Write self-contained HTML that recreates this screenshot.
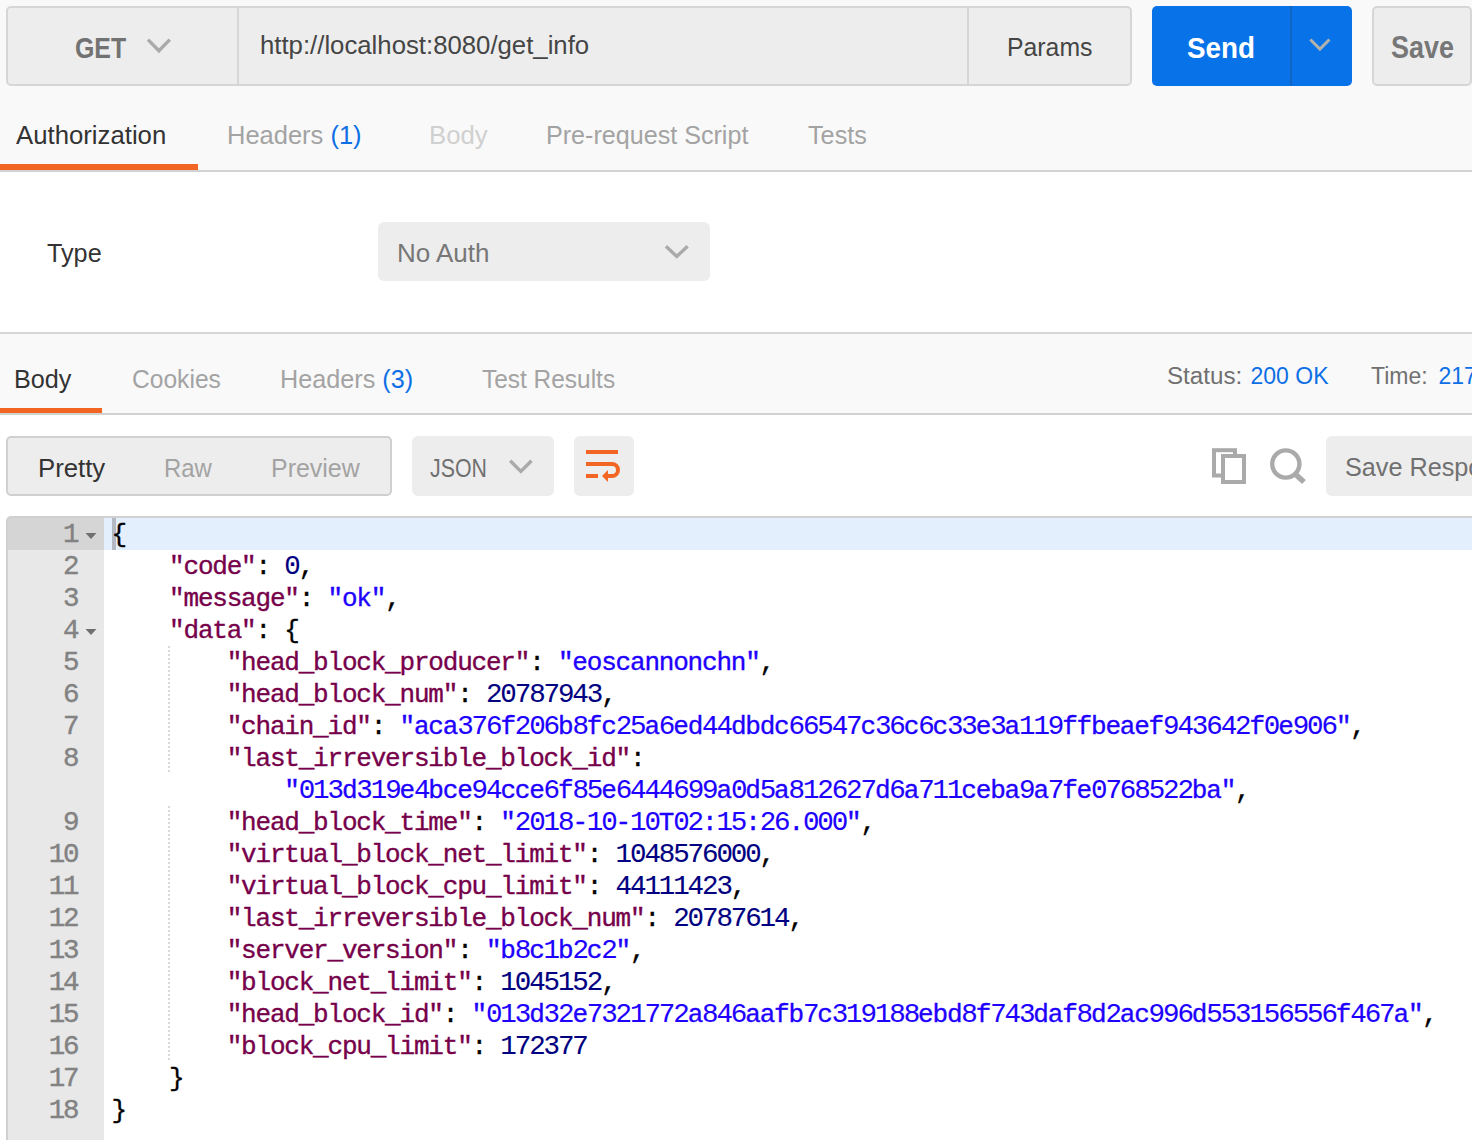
<!DOCTYPE html>
<html><head><meta charset="utf-8">
<style>
*{margin:0;padding:0;box-sizing:border-box}
html,body{width:1472px;height:1140px;overflow:hidden;background:#fff}
body{position:relative;font-family:"Liberation Sans",sans-serif}
.a{position:absolute}
.t{position:absolute;line-height:1;white-space:nowrap;transform-origin:0 0}
.box{position:absolute;background:#ededed}
.code{position:absolute;font-family:"Liberation Mono",monospace;font-size:26px;letter-spacing:-1.2px;-webkit-text-stroke:0.35px currentColor;white-space:pre;color:#000}
.ln{position:absolute;height:32px;line-height:32px}
.code i{font-style:normal;font-size:27.5px;letter-spacing:-2.1px;line-height:0;-webkit-text-stroke:0.1px currentColor}
.g i{font-style:normal;font-size:27.5px;letter-spacing:-2.1px;line-height:0;-webkit-text-stroke:0.4px currentColor}
.k{color:#76004a}.s{color:#1e00ff}.n{color:#000080}
.g{position:absolute;font-family:"Liberation Mono",monospace;font-size:26px;letter-spacing:-1.2px;color:#828282;-webkit-text-stroke:0.3px currentColor;text-align:right;width:77.5px;left:0;height:32px;line-height:32px;white-space:pre}
</style></head><body>

<div class="a" style="left:0;top:0;width:1472px;height:171px;background:#f9f9f9"></div>
<div class="box" style="left:6px;top:6px;width:1126px;height:80px;border:2px solid #d6d6d6;border-radius:5px"></div>
<div class="a" style="left:237px;top:8px;width:2px;height:76px;background:#d6d6d6"></div>
<div class="a" style="left:967px;top:8px;width:2px;height:76px;background:#d6d6d6"></div>
<div class="a" style="left:1152px;top:6px;width:200px;height:80px;background:#0872e8;border-radius:5px"></div>
<div class="a" style="left:1290px;top:6px;width:2px;height:80px;background:#1264c4"></div>
<div class="box" style="left:1372px;top:6px;width:100px;height:80px;border:2px solid #d6d6d6;border-radius:5px"></div>
<div class="a" style="left:0;top:164px;width:198px;height:6px;background:#f26522"></div>
<div class="a" style="left:0;top:170px;width:1472px;height:2px;background:#d2d2d2"></div>
<div class="box" style="left:378px;top:222px;width:332px;height:59px;border-radius:6px"></div>
<div class="a" style="left:0;top:332px;width:1472px;height:2px;background:#d6d6d6"></div>
<div class="a" style="left:0;top:334px;width:1472px;height:80px;background:#f9f9f9"></div>
<div class="a" style="left:0;top:408px;width:102px;height:6px;background:#f26522"></div>
<div class="a" style="left:0;top:413px;width:1472px;height:2px;background:#d2d2d2"></div>
<div class="box" style="left:6px;top:436px;width:386px;height:60px;border:2px solid #d0d0d0;border-radius:5px"></div>
<div class="box" style="left:412px;top:436px;width:142px;height:60px;border-radius:6px"></div>
<div class="box" style="left:574px;top:436px;width:60px;height:60px;border-radius:6px"></div>
<div class="box" style="left:1326px;top:436px;width:200px;height:60px;border-radius:6px"></div>
<div class="a" style="left:6px;top:516px;width:1500px;height:700px;border:2px solid #d0d0d0;border-radius:5px;background:#fff"></div>

<div class="t" style="left:75.00px;top:32.60px;font-size:30.00px;color:#727272;font-weight:bold;transform:scaleX(0.8300)">GET</div>
<div class="t" style="left:260.00px;top:32.09px;font-size:26.00px;color:#454545;transform:scaleX(0.9900)">http://localhost:8080/get_info</div>
<div class="t" style="left:1006.50px;top:33.86px;font-size:26.50px;color:#454545;transform:scaleX(0.9360)">Params</div>
<div class="t" style="left:1186.50px;top:33.85px;font-size:29.00px;color:#ffffff;font-weight:bold;transform:scaleX(0.9600)">Send</div>
<div class="t" style="left:1390.50px;top:31.95px;font-size:31.00px;color:#777777;font-weight:bold;transform:scaleX(0.8700)">Save</div>
<div class="t" style="left:15.50px;top:121.99px;font-size:26.00px;color:#333333;transform:scaleX(0.9900)">Authorization</div>
<div class="t" style="left:227.00px;top:121.99px;font-size:26.00px;color:#a3a3a3;transform:scaleX(0.9800)">Headers <span style="color:#0d6fe5">(1)</span></div>
<div class="t" style="left:429.00px;top:121.99px;font-size:26.00px;color:#d0d0d0;transform:scaleX(0.9900)">Body</div>
<div class="t" style="left:546.00px;top:121.99px;font-size:26.00px;color:#a3a3a3;transform:scaleX(0.9660)">Pre-request Script</div>
<div class="t" style="left:808.00px;top:121.99px;font-size:26.00px;color:#a3a3a3;transform:scaleX(0.9700)">Tests</div>
<div class="t" style="left:46.50px;top:240.29px;font-size:26.00px;color:#333333;transform:scaleX(0.9700)">Type</div>
<div class="t" style="left:397.00px;top:240.29px;font-size:26.00px;color:#777777">No Auth</div>
<div class="t" style="left:14.00px;top:365.79px;font-size:26.00px;color:#333333;transform:scaleX(0.9700)">Body</div>
<div class="t" style="left:132.00px;top:365.79px;font-size:26.00px;color:#a3a3a3;transform:scaleX(0.9460)">Cookies</div>
<div class="t" style="left:280.00px;top:365.79px;font-size:26.00px;color:#a3a3a3;transform:scaleX(0.9700)">Headers <span style="color:#0d6fe5">(3)</span></div>
<div class="t" style="left:482.00px;top:365.79px;font-size:26.00px;color:#a3a3a3;transform:scaleX(0.9400)">Test Results</div>
<div class="t" style="left:1166.50px;top:364.93px;font-size:23.00px;color:#707070;transform:scaleX(1.0500)">Status:</div>
<div class="t" style="left:1250.50px;top:364.93px;font-size:23.00px;color:#0d6fe5">200 OK</div>
<div class="t" style="left:1371.00px;top:364.93px;font-size:23.00px;color:#707070">Time:</div>
<div class="t" style="left:1438.50px;top:364.93px;font-size:23.00px;color:#0d6fe5">217 ms</div>
<div class="t" style="left:37.50px;top:454.99px;font-size:26.00px;color:#333333;transform:scaleX(0.9900)">Pretty</div>
<div class="t" style="left:163.50px;top:454.99px;font-size:26.00px;color:#a3a3a3;transform:scaleX(0.9200)">Raw</div>
<div class="t" style="left:270.60px;top:454.99px;font-size:26.00px;color:#a3a3a3;transform:scaleX(0.9600)">Preview</div>
<div class="t" style="left:430.00px;top:454.99px;font-size:26.00px;color:#707070;transform:scaleX(0.8200)">JSON</div>
<div class="t" style="left:1345.00px;top:454.09px;font-size:26.00px;color:#707070;transform:scaleX(0.9700)">Save Response</div>
<div class="a" style="left:8px;top:518px;width:96px;height:630px;background:#e8e8e8"></div>
<div class="a" style="left:8px;top:518px;width:96px;height:32px;background:#d5d5d5"></div>
<div class="a" style="left:104px;top:518px;width:1400px;height:32px;background:#e4effd"></div>
<div class="a" style="left:112px;top:518px;width:4px;height:32px;background:#b3b8c3"></div>
<div class="a" style="left:168px;top:646px;width:2px;height:128px;background:repeating-linear-gradient(to bottom,#dadada 0 2px,transparent 2px 4px)"></div>
<div class="a" style="left:168px;top:806px;width:2px;height:256px;background:repeating-linear-gradient(to bottom,#dadada 0 2px,transparent 2px 4px)"></div>
<div class="g" style="top:519px"><i>1</i></div>
<div class="ln code" style="top:519px;left:111.5px">{</div>
<div class="g" style="top:551px"><i>2</i></div>
<div class="ln code" style="top:551px;left:169.1px"><span class="k">&quot;code&quot;</span>: <span class="n"><i>0</i></span>,</div>
<div class="g" style="top:583px"><i>3</i></div>
<div class="ln code" style="top:583px;left:169.1px"><span class="k">&quot;message&quot;</span>: <span class="s">&quot;ok&quot;</span>,</div>
<div class="g" style="top:615px"><i>4</i></div>
<div class="ln code" style="top:615px;left:169.1px"><span class="k">&quot;data&quot;</span>: {</div>
<div class="g" style="top:647px"><i>5</i></div>
<div class="ln code" style="top:647px;left:226.7px"><span class="k">&quot;head_block_producer&quot;</span>: <span class="s">&quot;eoscannonchn&quot;</span>,</div>
<div class="g" style="top:679px"><i>6</i></div>
<div class="ln code" style="top:679px;left:226.7px"><span class="k">&quot;head_block_num&quot;</span>: <span class="n"><i>20787943</i></span>,</div>
<div class="g" style="top:711px"><i>7</i></div>
<div class="ln code" style="top:711px;left:226.7px"><span class="k">&quot;chain_id&quot;</span>: <span class="s">&quot;aca<i>376</i>f<i>206</i>b<i>8</i>fc<i>25</i>a<i>6</i>ed<i>44</i>dbdc<i>66547</i>c<i>36</i>c<i>6</i>c<i>33</i>e<i>3</i>a<i>119</i>ffbeaef<i>943642</i>f<i>0</i>e<i>906</i>&quot;</span>,</div>
<div class="g" style="top:743px"><i>8</i></div>
<div class="ln code" style="top:743px;left:226.7px"><span class="k">&quot;last_irreversible_block_id&quot;</span>:</div>
<div class="ln code" style="top:775px;left:284.3px"><span class="s">&quot;<i>013</i>d<i>319</i>e<i>4</i>bce<i>94</i>cce<i>6</i>f<i>85</i>e<i>6444699</i>a<i>0</i>d<i>5</i>a<i>812627</i>d<i>6</i>a<i>711</i>ceba<i>9</i>a<i>7</i>fe<i>0768522</i>ba&quot;</span>,</div>
<div class="g" style="top:807px"><i>9</i></div>
<div class="ln code" style="top:807px;left:226.7px"><span class="k">&quot;head_block_time&quot;</span>: <span class="s">&quot;<i>2018</i>-<i>10</i>-<i>10</i>T<i>02</i>:<i>15</i>:<i>26</i>.<i>000</i>&quot;</span>,</div>
<div class="g" style="top:839px"><i>10</i></div>
<div class="ln code" style="top:839px;left:226.7px"><span class="k">&quot;virtual_block_net_limit&quot;</span>: <span class="n"><i>1048576000</i></span>,</div>
<div class="g" style="top:871px"><i>11</i></div>
<div class="ln code" style="top:871px;left:226.7px"><span class="k">&quot;virtual_block_cpu_limit&quot;</span>: <span class="n"><i>44111423</i></span>,</div>
<div class="g" style="top:903px"><i>12</i></div>
<div class="ln code" style="top:903px;left:226.7px"><span class="k">&quot;last_irreversible_block_num&quot;</span>: <span class="n"><i>20787614</i></span>,</div>
<div class="g" style="top:935px"><i>13</i></div>
<div class="ln code" style="top:935px;left:226.7px"><span class="k">&quot;server_version&quot;</span>: <span class="s">&quot;b<i>8</i>c<i>1</i>b<i>2</i>c<i>2</i>&quot;</span>,</div>
<div class="g" style="top:967px"><i>14</i></div>
<div class="ln code" style="top:967px;left:226.7px"><span class="k">&quot;block_net_limit&quot;</span>: <span class="n"><i>1045152</i></span>,</div>
<div class="g" style="top:999px"><i>15</i></div>
<div class="ln code" style="top:999px;left:226.7px"><span class="k">&quot;head_block_id&quot;</span>: <span class="s">&quot;<i>013</i>d<i>32</i>e<i>7321772</i>a<i>846</i>aafb<i>7</i>c<i>319188</i>ebd<i>8</i>f<i>743</i>daf<i>8</i>d<i>2</i>ac<i>996</i>d<i>553156556</i>f<i>467</i>a&quot;</span>,</div>
<div class="g" style="top:1031px"><i>16</i></div>
<div class="ln code" style="top:1031px;left:226.7px"><span class="k">&quot;block_cpu_limit&quot;</span>: <span class="n"><i>172377</i></span></div>
<div class="g" style="top:1063px"><i>17</i></div>
<div class="ln code" style="top:1063px;left:169.1px">}</div>
<div class="g" style="top:1095px"><i>18</i></div>
<div class="ln code" style="top:1095px;left:111.5px">}</div>
<svg class="a" style="left:0;top:0" width="1472" height="1140" viewBox="0 0 1472 1140">
<polyline points="148.00,39.60 158.90,50.70 169.80,39.60" fill="none" stroke="#aaaaaa" stroke-width="3.40" stroke-linejoin="miter"/>
<polyline points="1310.36,39.56 1319.90,49.13 1329.44,39.56" fill="none" stroke="#b2b2ac" stroke-width="3.00" stroke-linejoin="miter"/>
<polyline points="665.90,246.20 676.75,256.40 687.60,246.20" fill="none" stroke="#aaaaaa" stroke-width="3.40" stroke-linejoin="miter"/>
<polyline points="510.20,460.70 520.85,471.40 531.50,460.70" fill="none" stroke="#aaaaaa" stroke-width="3.40" stroke-linejoin="miter"/>
<rect x="586" y="450" width="32" height="4" fill="#f26522"/>
<rect x="586" y="474" width="12" height="4" fill="#f26522"/>
<path d="M586 464 H612 A6 6 0 0 1 612 476 H606" fill="none" stroke="#f26522" stroke-width="4"/>
<polygon points="602,476 608,470 608,482" fill="#f26522"/>
<rect x="1214" y="450.2" width="21" height="25.3" fill="none" stroke="#aaaaaa" stroke-width="4"/>
<rect x="1223" y="456" width="21" height="26" fill="#fff" stroke="#aaaaaa" stroke-width="4"/>
<circle cx="1285.8" cy="464" r="13.6" fill="none" stroke="#aaaaaa" stroke-width="4.4"/>
<line x1="1294" y1="473" x2="1304" y2="482" stroke="#aaaaaa" stroke-width="5.5"/>
<polygon points="85.5,533 96.5,533 91,539" fill="#6f6f6f"/>
<polygon points="85.5,629 96.5,629 91,635" fill="#6f6f6f"/>
</svg>
</body></html>
